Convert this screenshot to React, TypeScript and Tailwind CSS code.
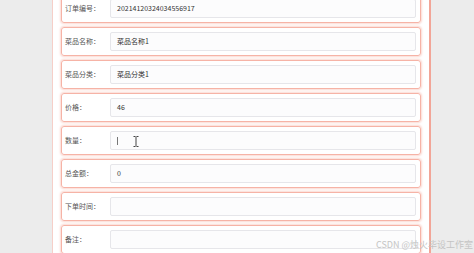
import { Fragment } from 'react';

const fields = [
  { label: '订单编号：', value: '20214120324034556917' },
  { label: '菜品名称：', value: '菜品名称1' },
  { label: '菜品分类：', value: '菜品分类1' },
  { label: '价格：', value: '46' },
  { label: '数量：', value: '', focused: true },
  { label: '总金额：', value: '0' },
  { label: '下单时间：', value: '' },
  { label: '备注：', value: '' },
];

function IBeam() {
  return (
    <svg width="6" height="11" viewBox="0 0 6 11" className="absolute left-[22px] top-[4px]">
      <path d="M0.5 0.5h2M3.5 0.5h2M3 0.8v9.4M0.5 10.5h2M3.5 10.5h2" stroke="#444" strokeWidth="1" fill="none" />
    </svg>
  );
}

export default function App() {
  return (
    <div
      className="relative flex h-[253px] w-[474px] overflow-hidden bg-[#ececec]"
      style={{ fontFamily: '"Noto Sans CJK SC", "Liberation Sans", sans-serif' }}
    >
      <div className="w-[52px] shrink-0" />
      <div className="w-[379px] shrink-0 border-l border-l-[#f6cfc8] border-r-2 border-r-[#f2a597] bg-white pl-2 pr-2">
        <div className="-mt-[6px] flex flex-col gap-[4px]">
          {fields.map((f) => (
            <div
              key={f.label}
              className="flex h-[29px] shrink-0 items-center rounded-[3px] border border-[#f6b3a6] shadow-[0_0_2px_1px_rgba(246,170,155,0.45)]"
            >
              <div className="w-[48px] shrink-0 pl-[3px] text-[7px] text-[#555]">{f.label}</div>
              <div className="relative flex h-[19px] w-[306px] items-center rounded-[2px] border border-[#e6e6ea] bg-[#fcfcfd] pl-[6px] text-[7px] text-[#333]">
                {f.focused ? (
                  <Fragment>
                    <span className="h-[8px] w-px bg-[#777]" />
                    <IBeam />
                  </Fragment>
                ) : (
                  f.value
                )}
              </div>
            </div>
          ))}
        </div>
      </div>
      <div className="absolute bottom-[4px] right-[1px] text-[9px] leading-none text-[#c4c4c4]">
        CSDN @烛火毕设工作室
      </div>
    </div>
  );
}
